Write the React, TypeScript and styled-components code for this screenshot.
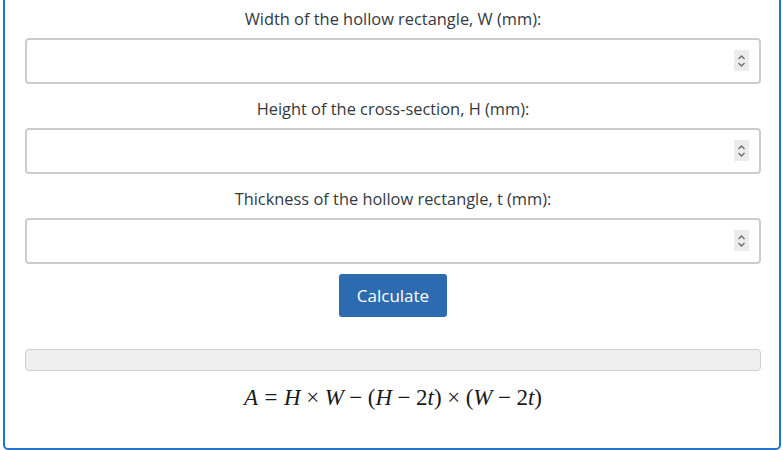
import styled, { createGlobalStyle } from "styled-components";

const GlobalStyle = createGlobalStyle`
  html, body {
    margin: 0;
    padding: 0;
    background: #fff;
    overflow: hidden;
  }
  body {
    font-family: "Open Sans", "Liberation Sans", sans-serif;
    color: #333;
  }
`;

const Card = styled.div`
  box-sizing: border-box;
  margin: -24px 2px 0 3px;
  height: 474px;
  border: 2px solid #1f75d1;
  border-radius: 5px;
  padding: 29px 18px 0 20px;
`;

const Field = styled.div`
  display: flex;
  flex-direction: column;
  align-items: stretch;
  margin-bottom: 13px;
`;

const Label = styled.label`
  text-align: center;
  font-size: 16.4px;
  line-height: 24px;
  color: #343a40;
  margin-bottom: 7px;
`;

const InputWrap = styled.div`
  position: relative;
`;

const NumberInput = styled.input`
  box-sizing: border-box;
  width: 100%;
  height: 46px;
  border: 2px solid #cdcdcd;
  border-radius: 4px;
  padding: 0 40px 0 12px;
  font: inherit;
  outline: none;
  -moz-appearance: textfield;
  &::-webkit-inner-spin-button,
  &::-webkit-outer-spin-button {
    -webkit-appearance: none;
    margin: 0;
  }
`;

const Spinner = styled.span`
  position: absolute;
  right: 12px;
  top: 12px;
  width: 15px;
  height: 21px;
  background: #ececec;
  display: flex;
  align-items: center;
  justify-content: center;
`;

const Actions = styled.div`
  display: flex;
  justify-content: center;
  margin-top: -3px;
`;

const CalcButton = styled.button`
  width: 108px;
  height: 43px;
  border: none;
  border-radius: 3px;
  background: #2d6bb1;
  color: #fff;
  font-family: inherit;
  font-size: 17px;
  cursor: pointer;
`;

const ResultBar = styled.div`
  box-sizing: border-box;
  margin-top: 32px;
  height: 22px;
  border: 1px solid #cfcfcf;
  border-radius: 4px;
  background: #efefef;
`;

const Formula = styled.div`
  margin-top: 14px;
  text-align: center;
  font-family: "Liberation Serif", "DejaVu Serif", serif;
  font-size: 23px;
  line-height: 26px;
  color: #1a1a1a;
  white-space: nowrap;
`;

const Var = styled.i`
  font-style: italic;
`;

const Op = styled.span<{ $rel?: boolean }>`
  padding: 0 ${({ $rel }) => ($rel ? "6.5px" : "5.5px")};
`;

const SpinIcon = () => (
  <svg width="9" height="14" viewBox="0 0 9 14" fill="none" stroke="#6b6b6b" strokeWidth="1.3">
    <path d="M1.5 5 L4.5 2 L7.5 5" />
    <path d="M1.5 9 L4.5 12 L7.5 9" />
  </svg>
);

const fields = [
  { id: "w", label: "Width of the hollow rectangle, W (mm):" },
  { id: "h", label: "Height of the cross-section, H (mm):" },
  { id: "t", label: "Thickness of the hollow rectangle, t (mm):" },
];

export default function App() {
  return (
    <>
      <GlobalStyle />
      <Card>
        {fields.map((f) => (
          <Field key={f.id}>
            <Label htmlFor={f.id}>{f.label}</Label>
            <InputWrap>
              <NumberInput id={f.id} type="number" />
              <Spinner>
                <SpinIcon />
              </Spinner>
            </InputWrap>
          </Field>
        ))}
        <Actions>
          <CalcButton>Calculate</CalcButton>
        </Actions>
        <ResultBar />
        <Formula>
          <Var>A</Var>
          <Op $rel>=</Op>
          <Var>H</Var>
          <Op>×</Op>
          <Var>W</Var>
          <Op>−</Op>(<Var>H</Var>
          <Op>−</Op>2<Var>t</Var>)<Op>×</Op>(<Var>W</Var>
          <Op>−</Op>2<Var>t</Var>)
        </Formula>
      </Card>
    </>
  );
}
